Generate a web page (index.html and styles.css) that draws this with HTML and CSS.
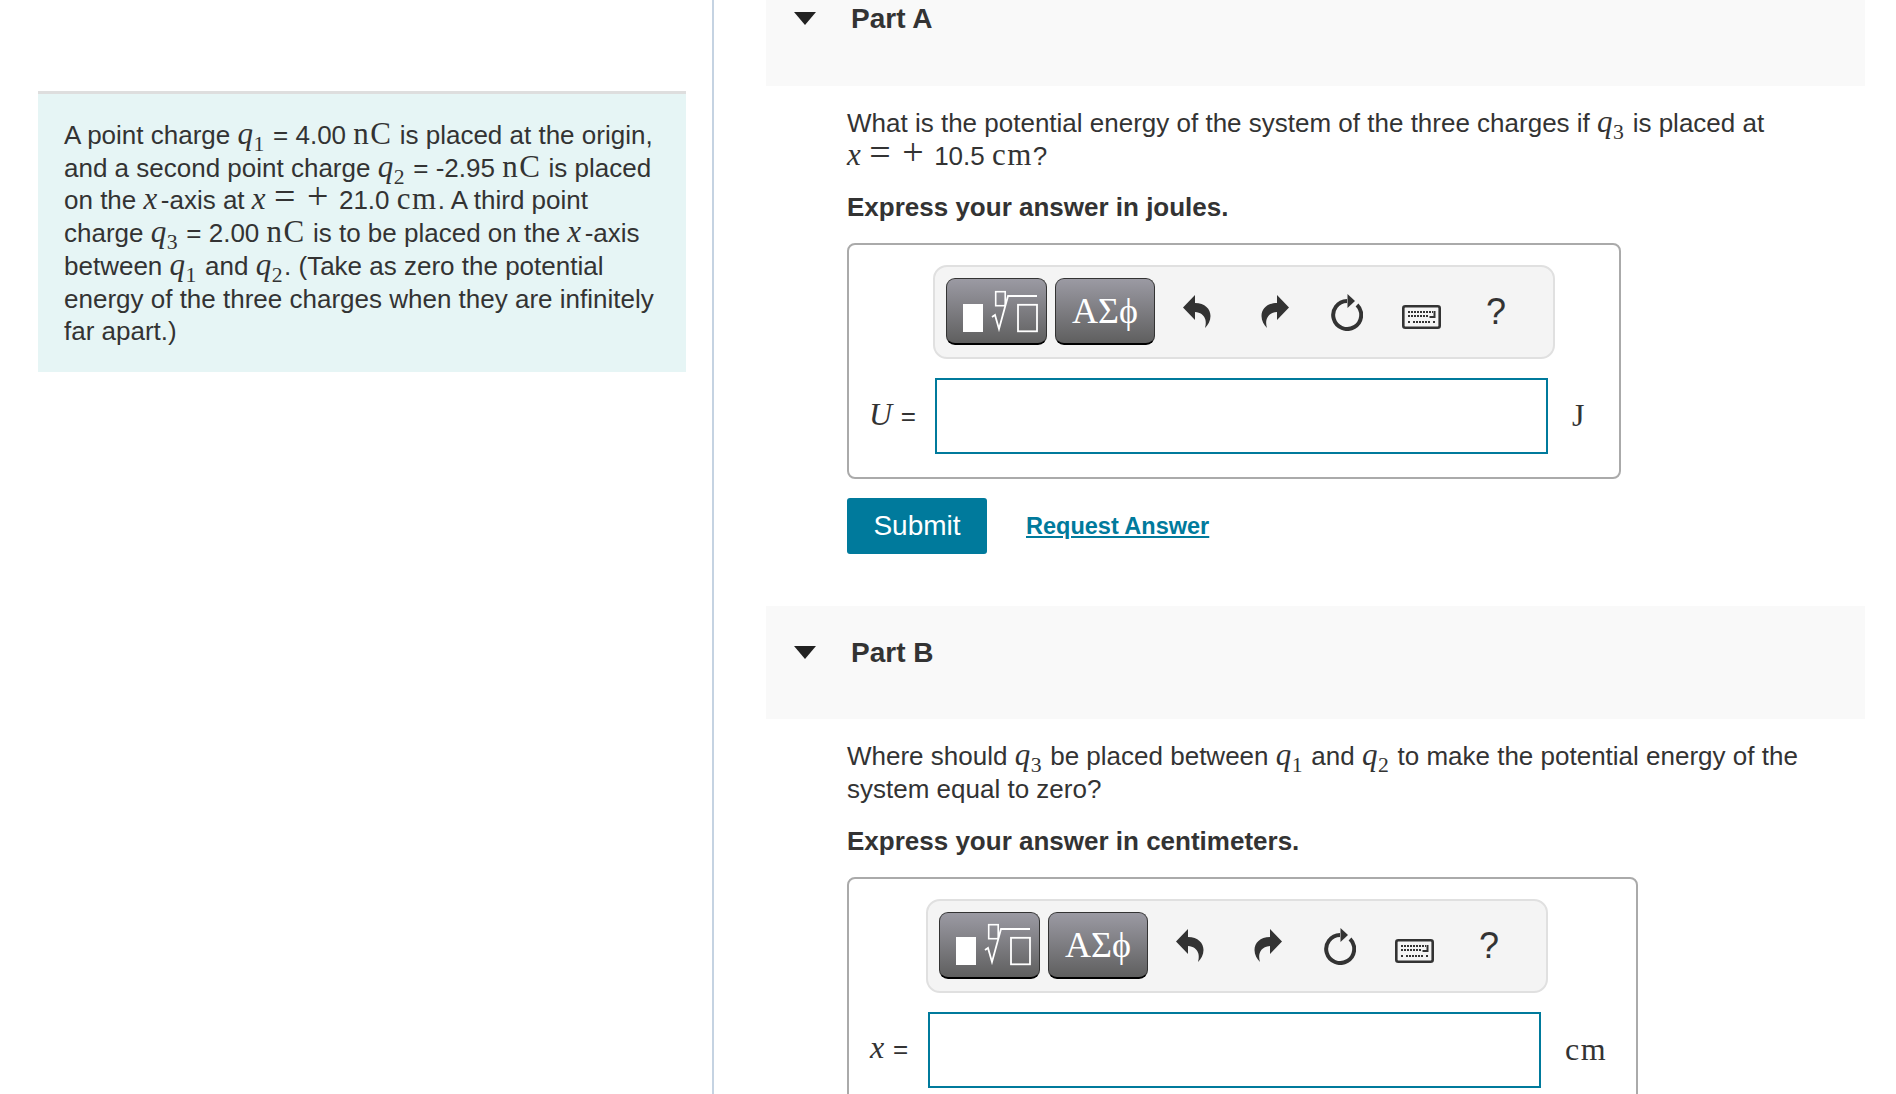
FILE: index.html
```html
<!DOCTYPE html>
<html lang="en">
<head>
  <meta charset="UTF-8" />
  <title>Potential energy of three charges</title>
  <link rel="stylesheet" href="styles.css">
</head>
<body>
  <div class="page">
    <div class="left-col">
      <div class="intro">
        A point charge <span class="m"><i>q</i><sub>1</sub></span> = 4.00 <span class="m">nC</span> is placed at the origin,<br>
        and a second point charge <span class="m"><i>q</i><sub>2</sub></span> = -2.95 <span class="m">nC</span> is placed<br>
        on the <span class="m"><i class="var-x">x</i></span>-axis at <span class="m"><i class="var-x">x</i><span class="op">=</span><span class="op">+</span></span>21.0 <span class="m">cm</span>. A third point<br>
        charge <span class="m"><i>q</i><sub>3</sub></span> = 2.00 <span class="m">nC</span> is to be placed on the <span class="m"><i class="var-x">x</i></span>-axis<br>
        between <span class="m"><i>q</i><sub>1</sub></span> and <span class="m"><i>q</i><sub>2</sub></span>. (Take as zero the potential<br>
        energy of the three charges when they are infinitely<br>
        far apart.)
      </div>
    </div>

    <div class="right-col">
      <div class="part-head part-head-a">
        <span class="arrow"></span>
        <h2>Part A</h2>
      </div>
      <div class="part-body">
        <p class="question">What is the potential energy of the system of the three charges if <span class="m"><i>q</i><sub>3</sub></span> is placed at<br>
        <span class="m"><i class="var-x">x</i><span class="op">=</span><span class="op">+</span></span>10.5 <span class="m">cm</span>?</p>
        <p class="express">Express your answer in joules.</p>
        <div class="answer-box box-a">
          <div class="toolbar">
            <button class="tool-btn tool-math">
              <svg width="99" height="65" viewBox="0 0 99 65">
                <rect x="16" y="25" width="20" height="28" fill="#fff"/>
                <rect x="48.7" y="12.7" width="9.5" height="14" fill="none" stroke="#fff" stroke-width="1.6"/>
                <path d="M45 38l3-2 4 14 9-33h29" fill="none" stroke="#fff" stroke-width="1.8"/>
                <rect x="71" y="25.8" width="19" height="26.5" fill="none" stroke="#fff" stroke-width="1.8"/>
              </svg>
            </button>
            <button class="tool-btn tool-greek">ΑΣϕ</button>
            <svg class="icon icon-undo" width="28" height="33" viewBox="0 0 28 33"><path d="M0 12.5L12 0v8c10 0 15.5 6 15.5 13 0 5-2.500 9-5.500 12 2-6 1-15-10-16v8z" fill="#333"/></svg>
            <svg class="icon icon-redo" width="28" height="33" viewBox="0 0 28 33"><path d="M28 12.500L16 0v8C6 8 .5 14 .5 21c0 5 2.500 9 5.500 12-2-6-1-15 10-16v8z" fill="#333"/></svg>
            <svg class="icon icon-reset" width="32" height="37" viewBox="0 0 32 37"><path d="M26 11A14 14 0 1 1 16 7" fill="none" stroke="#333" stroke-width="4"/><path d="M16.500 0L24 7l-7.500 7z" fill="#333"/></svg>
            <svg class="icon icon-keys" width="39" height="24" viewBox="0 0 39 24"><rect x="1.300" y="1.300" width="36.400" height="21.400" rx="2" fill="#f4f4f4" stroke="#333" stroke-width="2.600"/><path d="M6 7h25M6 11h21M6 17h2M11 17h17M31 17h2" stroke="#333" stroke-width="2" stroke-dasharray="2 1"/><path d="M32.500 6v6h-5" fill="none" stroke="#333" stroke-width="2"/></svg>
            <span class="help">?</span>
          </div>
          <div class="input-row">
            <span class="label"><i class="m big">U</i> =</span>
            <div class="input"></div>
            <span class="unit m">J</span>
          </div>
        </div>
        <div class="actions">
          <button class="submit">Submit</button>
          <a class="request" href="#">Request Answer</a>
        </div>
      </div>

      <div class="part-head part-head-b">
        <span class="arrow"></span>
        <h2>Part B</h2>
      </div>
      <div class="part-body">
        <p class="question">Where should <span class="m"><i>q</i><sub>3</sub></span> be placed between <span class="m"><i>q</i><sub>1</sub></span> and <span class="m"><i>q</i><sub>2</sub></span> to make the potential energy of the<br>
        system equal to zero?</p>
        <p class="express">Express your answer in centimeters.</p>
        <div class="answer-box box-b">
          <div class="toolbar">
            <button class="tool-btn tool-math">
              <svg width="99" height="65" viewBox="0 0 99 65">
                <rect x="16" y="25" width="20" height="28" fill="#fff"/>
                <rect x="48.7" y="12.7" width="9.5" height="14" fill="none" stroke="#fff" stroke-width="1.6"/>
                <path d="M45 38l3-2 4 14 9-33h29" fill="none" stroke="#fff" stroke-width="1.8"/>
                <rect x="71" y="25.8" width="19" height="26.5" fill="none" stroke="#fff" stroke-width="1.8"/>
              </svg>
            </button>
            <button class="tool-btn tool-greek">ΑΣϕ</button>
            <svg class="icon icon-undo" width="28" height="33" viewBox="0 0 28 33"><path d="M0 12.5L12 0v8c10 0 15.5 6 15.5 13 0 5-2.500 9-5.500 12 2-6 1-15-10-16v8z" fill="#333"/></svg>
            <svg class="icon icon-redo" width="28" height="33" viewBox="0 0 28 33"><path d="M28 12.500L16 0v8C6 8 .5 14 .5 21c0 5 2.500 9 5.500 12-2-6-1-15 10-16v8z" fill="#333"/></svg>
            <svg class="icon icon-reset" width="32" height="37" viewBox="0 0 32 37"><path d="M26 11A14 14 0 1 1 16 7" fill="none" stroke="#333" stroke-width="4"/><path d="M16.500 0L24 7l-7.500 7z" fill="#333"/></svg>
            <svg class="icon icon-keys" width="39" height="24" viewBox="0 0 39 24"><rect x="1.300" y="1.300" width="36.400" height="21.400" rx="2" fill="#f4f4f4" stroke="#333" stroke-width="2.600"/><path d="M6 7h25M6 11h21M6 17h2M11 17h17M31 17h2" stroke="#333" stroke-width="2" stroke-dasharray="2 1"/><path d="M32.500 6v6h-5" fill="none" stroke="#333" stroke-width="2"/></svg>
            <span class="help">?</span>
          </div>
          <div class="input-row">
            <span class="label"><i class="m big">x</i> =</span>
            <div class="input"></div>
            <span class="unit m">cm</span>
          </div>
        </div>
      </div>
    </div>
  </div>
</body>
</html>
```

FILE: styles.css
```css
* {
  margin: 0;
  padding: 0;
  box-sizing: border-box;
}
html, body {
  height: 100%;
  overflow: hidden;
}
body {
  font-family: "Liberation Sans", Arial, sans-serif;
  font-size: 26px;
  color: #333;
  background: #fff;
}
.page {
  display: flex;
  height: 1094px;
  overflow: hidden;
}
.left-col {
  width: 714px;
  flex-shrink: 0;
  padding: 91px 26px 0 38px;
  border-right: 2px solid #c5d3e2;
}
.intro {
  background: #e6f5f5;
  border-top: 3px solid #dedede;
  height: 281px;
  padding: 25px 26px 0;
  line-height: 32.7px;
  white-space: nowrap;
}
.right-col {
  width: 1099px;
  margin-left: 52px;
  flex-shrink: 0;
}
/* math text, TeX fonts are not available so serif stands in */
.m {
  font-family: "Liberation Serif", "Times New Roman", serif;
  font-size: 31px;
  line-height: 0;
  letter-spacing: 1.5px;
}
.m i {
  letter-spacing: .5px;
}
.m sub {
  font-size: 70%;
  line-height: 0;
}
.m.big {
  font-size: 32px;
}
.m .var-x {
  margin-right: 3px;
}
.op {
  font-size: 38px;
  margin: 0 5px;
}
.op + .op {
  margin-right: 9px;
}
.part-head {
  background: #f9f9f9;
  display: flex;
  gap: 35px;
  align-items: flex-start;
  padding-left: 28px;
}
.part-head-a {
  height: 86px;
  padding-top: 3px;
}
.part-head-b {
  height: 113px;
  padding-top: 31px;
}
.part-head h2 {
  font-size: 28px;
  font-weight: bold;
  line-height: 32px;
  color: #333;
}
.arrow {
  width: 0;
  height: 0;
  margin-top: 9px;
  border-left: 11px solid transparent;
  border-right: 11px solid transparent;
  border-top: 13px solid #222;
}
.part-body {
  padding-left: 81px;
}
.question {
  padding-top: 21px;
  line-height: 32.7px;
}
.express {
  margin-top: 19px;
  font-weight: bold;
  line-height: 32px;
}
.answer-box {
  margin-top: 20px;
  height: 236px;
  border: 2px solid #aaa;
  border-radius: 8px;
  background: #fff;
  padding-top: 20px;
}
.box-a {
  width: 774px;
}
.box-a .toolbar {
  margin-left: 84px;
}
.box-a .label {
  width: 86px;
}
.box-b {
  width: 791px;
}
.box-b .toolbar {
  margin-left: 77px;
}
.box-b .label {
  width: 79px;
  padding-left: 21px;
}
.toolbar {
  width: 622px;
  height: 94px;
  display: flex;
  align-items: flex-start;
  padding: 11px 0 0 11px;
  background: #f4f4f4;
  border: 2px solid #e0e0e0;
  border-radius: 14px;
}
.tool-btn {
  height: 67px;
  border: 1px solid #333;
  border-bottom: 2px solid #000;
  border-radius: 9px;
  background: linear-gradient(#9b9aa3, #5f5f5f);
  color: #fff;
  display: flex;
  align-items: center;
  justify-content: center;
  flex-shrink: 0;
}
.tool-math {
  width: 101px;
  margin-right: 8px;
}
.tool-greek {
  width: 100px;
  font-family: "Liberation Serif", serif;
  font-size: 36px;
}
.icon {
  flex-shrink: 0;
  display: block;
}
.icon-undo {
  margin: 17px 0 0 28px;
}
.icon-redo {
  margin: 17px 0 0 50px;
}
.icon-reset {
  margin: 16px 0 0 42px;
}
.icon-keys {
  margin: 27px 0 0 39px;
}
.help {
  font-size: 36px;
  line-height: 42px;
  margin: 13px 0 0 45px;
}
.input-row {
  display: flex;
  align-items: center;
  margin-top: 19px;
}
.label {
  padding-left: 20px;
  flex-shrink: 0;
}
.input {
  width: 613px;
  height: 76px;
  border: 2px solid #007a9c;
  flex-shrink: 0;
}
.unit {
  margin: -2px 0 0 24px;
  font-size: 32px;
}
.actions {
  display: flex;
  align-items: center;
  gap: 39px;
  margin-top: 19px;
  margin-bottom: 52px;
}
.submit {
  width: 140px;
  height: 56px;
  border: none;
  border-radius: 3px;
  background: #007a9c;
  color: #fff;
  font-family: inherit;
  font-size: 28px;
}
.request {
  color: #007a9c;
  font-weight: bold;
  font-size: 23.500px;
}
```
